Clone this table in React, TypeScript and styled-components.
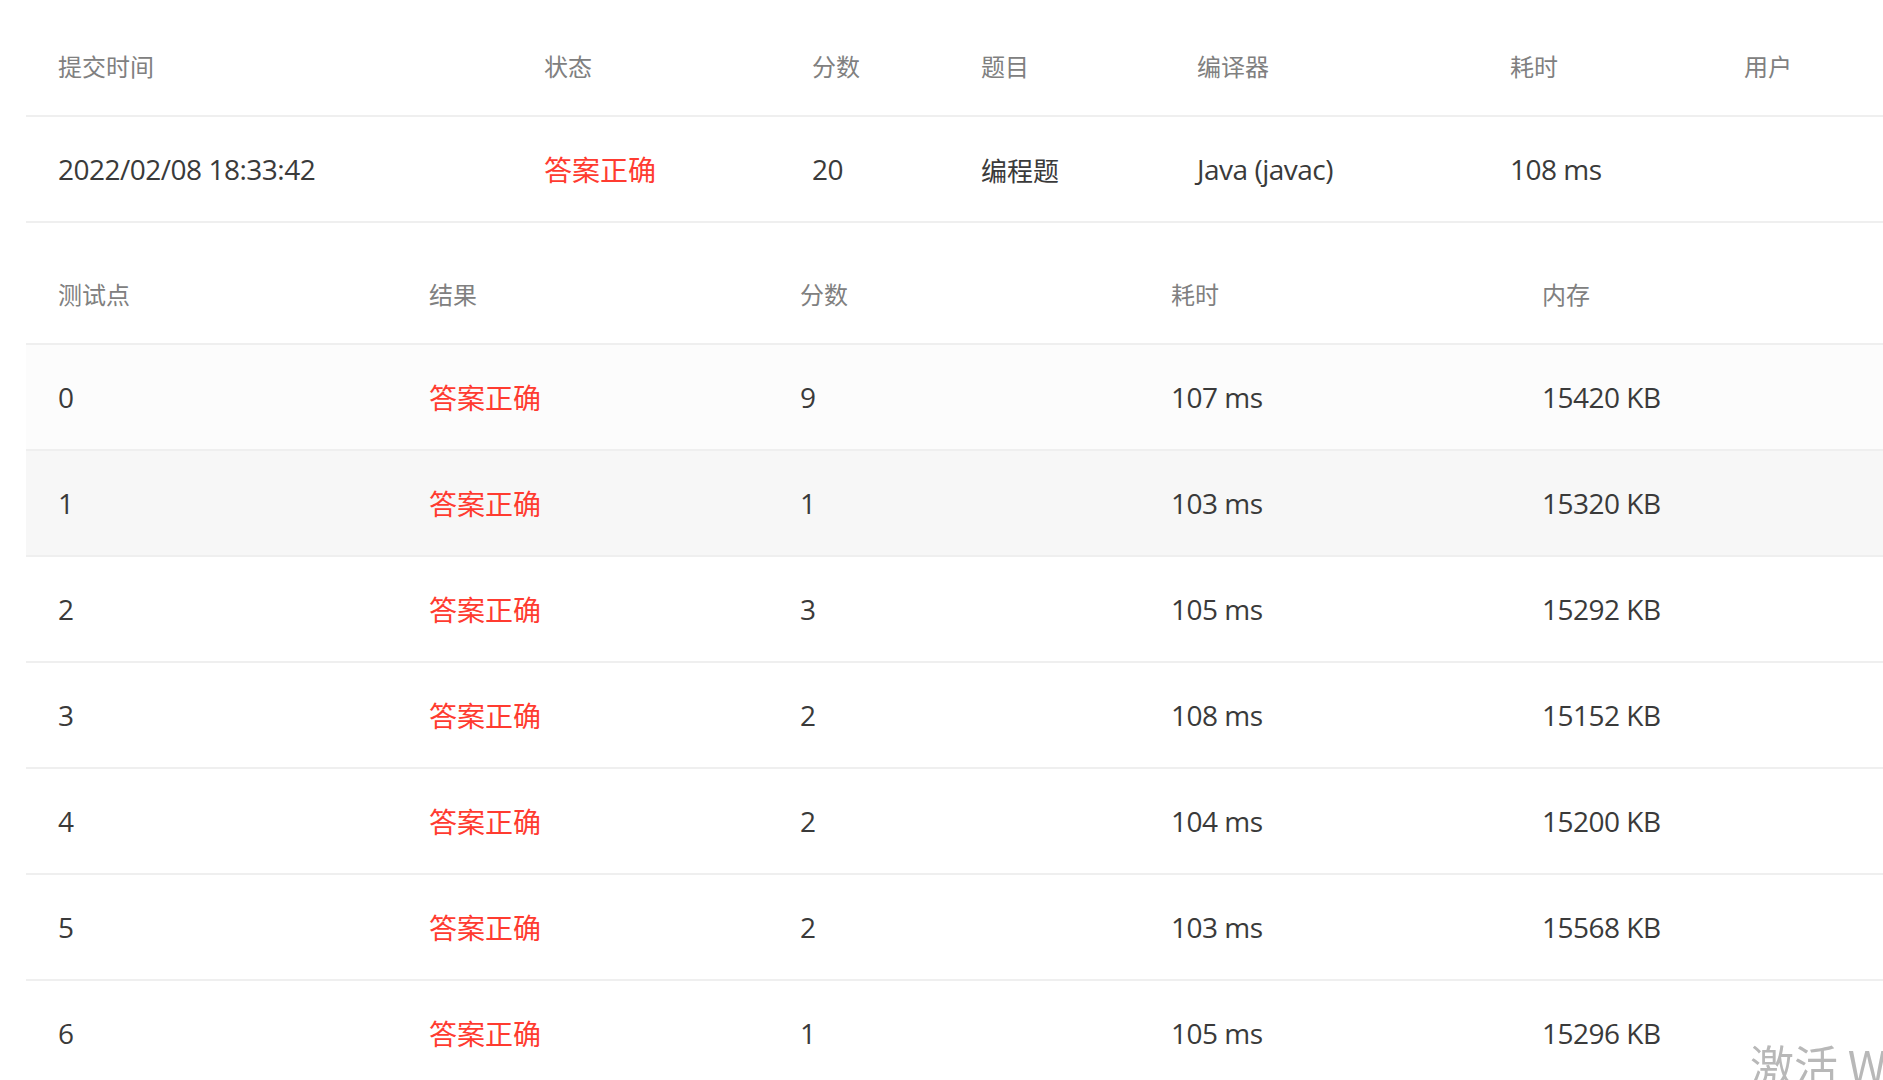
import React from "react";
import styled, { createGlobalStyle } from "styled-components";

const GlobalStyle = createGlobalStyle`
  html, body {
    margin: 0;
    padding: 0;
    background: #ffffff;
    overflow: hidden;
  }
  body {
    font-family: "Open Sans", "Noto Sans", "Noto Sans CJK SC", sans-serif;
    color: #3a3a3a;
  }
`;

const Page = styled.div`
  width: 1883px;
  height: 1080px;
  padding-left: 26px;
  box-sizing: border-box;
  display: flex;
  flex-direction: column;
  overflow: hidden;
`;

const Table = styled.div<{ $cols: string; $top: number }>`
  display: grid;
  grid-template-columns: ${(p) => p.$cols};
  margin-top: ${(p) => p.$top}px;
  width: 1857px;
`;

const Row = styled.div<{ $bg?: string }>`
  display: contents;
  & > div {
    background: ${(p) => p.$bg || "#ffffff"};
  }
`;

const HeadCell = styled.div`
  height: 106px;
  padding: 5px 0 0 32px;
  box-sizing: border-box;
  border-bottom: 2px solid #efefef;
  display: flex;
  align-items: center;
  font-family: "Noto Sans CJK SC", "Noto Sans", sans-serif;
  font-size: 24px;
  color: #808080;
`;

const Cell = styled.div<{ $red?: boolean; $cjk?: boolean }>`
  height: 106px;
  padding-left: 32px;
  box-sizing: border-box;
  border-bottom: 2px solid #efefef;
  display: flex;
  align-items: center;
  font-size: ${(p) => (p.$cjk ? 26 : 28)}px;
  white-space: nowrap;
  letter-spacing: ${(p) => (p.$red || p.$cjk ? "0" : "-0.5px")};
  font-family: ${(p) =>
    p.$red || p.$cjk
      ? `"Noto Sans CJK SC", "Noto Sans", sans-serif`
      : `"Open Sans", "Noto Sans", "Noto Sans CJK SC", sans-serif`};
  color: ${(p) => (p.$red ? "#ff3b30" : "#3a3a3a")};
`;

const Watermark = styled.div`
  position: fixed;
  left: 1750px;
  top: 1042px;
  font-family: "Noto Sans CJK SC", "Noto Sans", sans-serif;
  font-size: 44px;
  line-height: 1;
  color: #b8b8b8;
  white-space: nowrap;
  pointer-events: none;
`;

const summaryHead = ["提交时间", "状态", "分数", "题目", "编译器", "耗时", "用户"];

const cases = [
  { id: "0", score: "9", time: "107 ms", mem: "15420 KB", bg: "#fcfcfc" },
  { id: "1", score: "1", time: "103 ms", mem: "15320 KB", bg: "#f7f7f7" },
  { id: "2", score: "3", time: "105 ms", mem: "15292 KB" },
  { id: "3", score: "2", time: "108 ms", mem: "15152 KB" },
  { id: "4", score: "2", time: "104 ms", mem: "15200 KB" },
  { id: "5", score: "2", time: "103 ms", mem: "15568 KB" },
  { id: "6", score: "1", time: "105 ms", mem: "15296 KB" },
];

export default function App() {
  return (
    <>
      <GlobalStyle />
      <Page>
        <Table $cols="486px 268px 169px 216px 313px 234px 1fr" $top={11}>
          <Row>
            {summaryHead.map((h) => (
              <HeadCell key={h}>{h}</HeadCell>
            ))}
          </Row>
          <Row>
            <Cell>2022/02/08 18:33:42</Cell>
            <Cell $red>答案正确</Cell>
            <Cell>20</Cell>
            <Cell $cjk>编程题</Cell>
            <Cell>Java (javac)</Cell>
            <Cell>108 ms</Cell>
            <Cell />
          </Row>
        </Table>
        <Table $cols="371px 371px 371px 371px 1fr" $top={16}>
          <Row>
            {["测试点", "结果", "分数", "耗时", "内存"].map((h) => (
              <HeadCell key={h}>{h}</HeadCell>
            ))}
          </Row>
          {cases.map((c) => (
            <Row key={c.id} $bg={c.bg}>
              <Cell>{c.id}</Cell>
              <Cell $red>答案正确</Cell>
              <Cell>{c.score}</Cell>
              <Cell>{c.time}</Cell>
              <Cell>{c.mem}</Cell>
            </Row>
          ))}
        </Table>
      </Page>
      <Watermark>激活 W</Watermark>
    </>
  );
}
